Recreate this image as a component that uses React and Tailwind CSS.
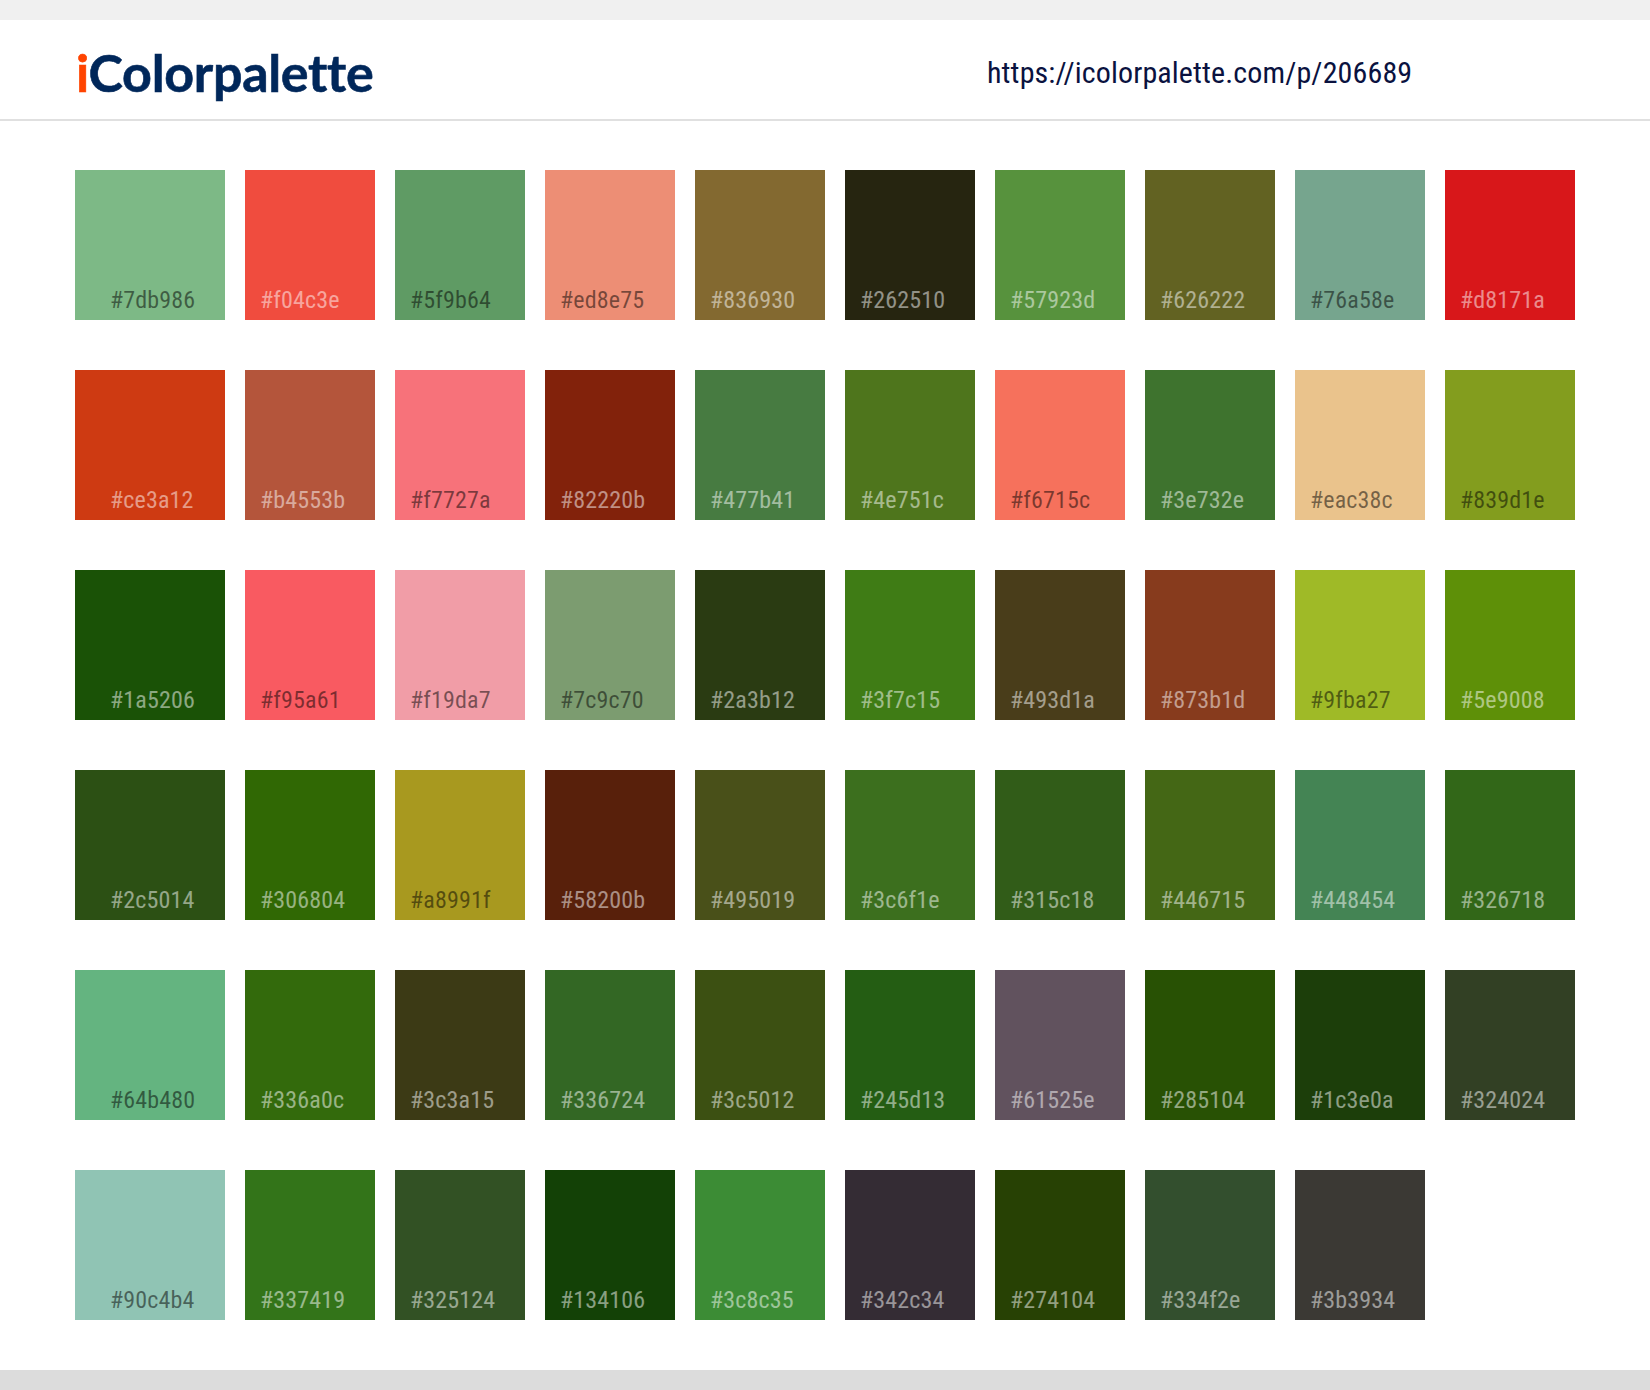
const swatches = [
  ['#7db986','bg-[#7db986]'],['#f04c3e','bg-[#f04c3e]'],['#5f9b64','bg-[#5f9b64]'],['#ed8e75','bg-[#ed8e75]'],['#836930','bg-[#836930]'],['#262510','bg-[#262510]'],['#57923d','bg-[#57923d]'],['#626222','bg-[#626222]'],['#76a58e','bg-[#76a58e]'],['#d8171a','bg-[#d8171a]'],
  ['#ce3a12','bg-[#ce3a12]'],['#b4553b','bg-[#b4553b]'],['#f7727a','bg-[#f7727a]'],['#82220b','bg-[#82220b]'],['#477b41','bg-[#477b41]'],['#4e751c','bg-[#4e751c]'],['#f6715c','bg-[#f6715c]'],['#3e732e','bg-[#3e732e]'],['#eac38c','bg-[#eac38c]'],['#839d1e','bg-[#839d1e]'],
  ['#1a5206','bg-[#1a5206]'],['#f95a61','bg-[#f95a61]'],['#f19da7','bg-[#f19da7]'],['#7c9c70','bg-[#7c9c70]'],['#2a3b12','bg-[#2a3b12]'],['#3f7c15','bg-[#3f7c15]'],['#493d1a','bg-[#493d1a]'],['#873b1d','bg-[#873b1d]'],['#9fba27','bg-[#9fba27]'],['#5e9008','bg-[#5e9008]'],
  ['#2c5014','bg-[#2c5014]'],['#306804','bg-[#306804]'],['#a8991f','bg-[#a8991f]'],['#58200b','bg-[#58200b]'],['#495019','bg-[#495019]'],['#3c6f1e','bg-[#3c6f1e]'],['#315c18','bg-[#315c18]'],['#446715','bg-[#446715]'],['#448454','bg-[#448454]'],['#326718','bg-[#326718]'],
  ['#64b480','bg-[#64b480]'],['#336a0c','bg-[#336a0c]'],['#3c3a15','bg-[#3c3a15]'],['#336724','bg-[#336724]'],['#3c5012','bg-[#3c5012]'],['#245d13','bg-[#245d13]'],['#61525e','bg-[#61525e]'],['#285104','bg-[#285104]'],['#1c3e0a','bg-[#1c3e0a]'],['#324024','bg-[#324024]'],
  ['#90c4b4','bg-[#90c4b4]'],['#337419','bg-[#337419]'],['#325124','bg-[#325124]'],['#134106','bg-[#134106]'],['#3c8c35','bg-[#3c8c35]'],['#342c34','bg-[#342c34]'],['#274104','bg-[#274104]'],['#334f2e','bg-[#334f2e]'],['#3b3934','bg-[#3b3934]'],
];
const isLight = (hex) => {
  const n = parseInt(hex.slice(1), 16);
  return ((n >> 16) * 299 + ((n >> 8) & 255) * 587 + (n & 255) * 114) / 1000 >= 128;
};
export default function App() {
  return (
    <div className="min-h-[1390px] flex flex-col bg-white">
      <div className="h-5 bg-[#f0f0f0]" />
      <header className="h-[101px] flex items-center pl-[76px] border-b-2 border-[#e0e0e0]">
        <div className="w-[911px] mt-1 font-['Lato',sans-serif] font-bold text-[#00275a] text-[52px] leading-none tracking-[-0.3px] [-webkit-text-stroke:0.6px]">
          <span className="text-[#ff4400]">i</span>Colorpalette
        </div>
        <div className="font-['Roboto',sans-serif] font-stretch-condensed text-[30px] tracking-[0.13px] leading-none text-[#0a1240] mt-1.5">https://icolorpalette.com/p/206689</div>
      </header>
      <main className="flex-1 pt-[49px] pl-[75px] grid grid-cols-[150px_repeat(9,130px)] auto-rows-[150px] gap-x-5 gap-y-[50px] content-start">
        {swatches.map(([hex, bg], i) => (
          <div key={hex} className={`${bg} flex items-end ${i % 10 === 0 ? 'pl-[35px]' : 'pl-[15px]'} pb-1.5`}>
            <span className={`font-['Roboto',sans-serif] font-stretch-condensed text-[24px] tracking-[0.15px] leading-7 ${isLight(hex) ? 'text-black/50' : 'text-white/50'}`}>{hex}</span>
          </div>
        ))}
      </main>
      <div className="h-5 bg-[#dcdcdc]" />
    </div>
  );
}
